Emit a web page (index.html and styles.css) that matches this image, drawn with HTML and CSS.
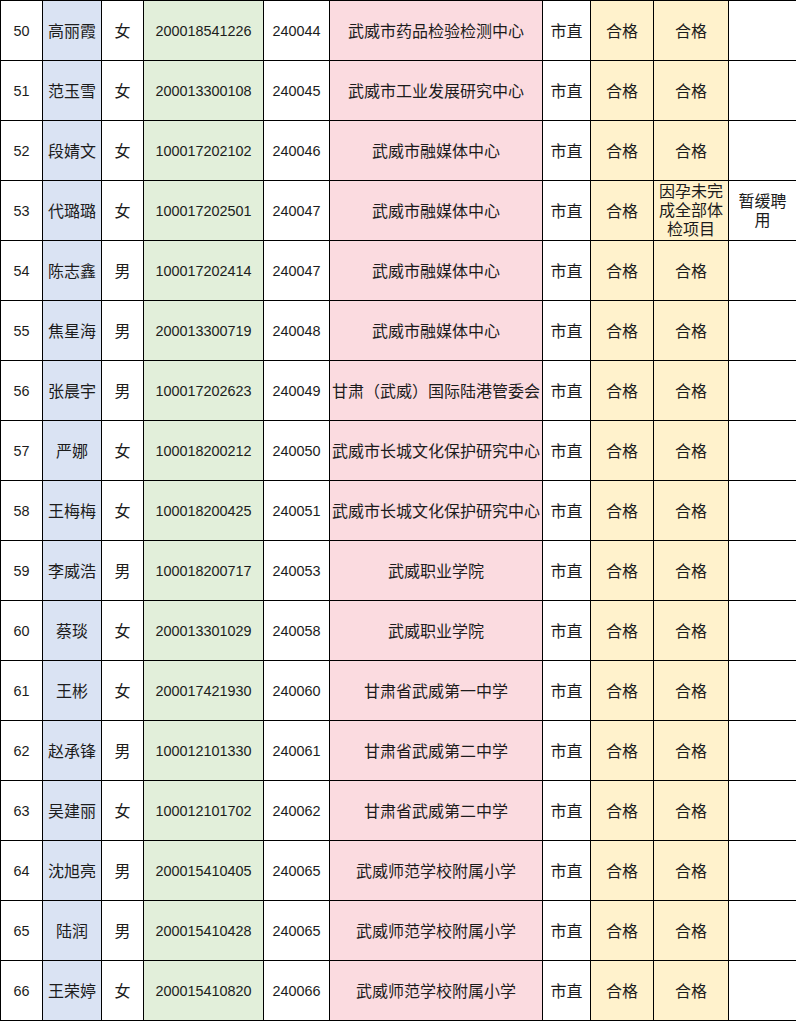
FILE: index.html
```html
<!DOCTYPE html>
<html lang="zh-CN">
<head>
<meta charset="utf-8">
<link rel="stylesheet" href="styles.css">
</head>
<body>
<table class="sheet">
<colgroup>
<col class="c-no"><col class="c-name"><col class="c-sex"><col class="c-id"><col class="c-code"><col class="c-unit"><col class="c-lvl"><col class="c-r1"><col class="c-r2"><col class="c-note">
</colgroup>
<tbody>
<tr><td class="num">50</td><td class="name">高丽霞</td><td>女</td><td class="id num">200018541226</td><td class="num">240044</td><td class="unit">武威市药品检验检测中心</td><td>市直</td><td class="ok">合格</td><td class="ok">合格</td><td></td></tr>
<tr><td class="num">51</td><td class="name">范玉雪</td><td>女</td><td class="id num">200013300108</td><td class="num">240045</td><td class="unit">武威市工业发展研究中心</td><td>市直</td><td class="ok">合格</td><td class="ok">合格</td><td></td></tr>
<tr><td class="num">52</td><td class="name">段婧文</td><td>女</td><td class="id num">100017202102</td><td class="num">240046</td><td class="unit">武威市融媒体中心</td><td>市直</td><td class="ok">合格</td><td class="ok">合格</td><td></td></tr>
<tr><td class="num">53</td><td class="name">代璐璐</td><td>女</td><td class="id num">100017202501</td><td class="num">240047</td><td class="unit">武威市融媒体中心</td><td>市直</td><td class="ok">合格</td><td class="ok wrap">因孕未完成全部体检项目</td><td class="wrap">暂缓聘用</td></tr>
<tr><td class="num">54</td><td class="name">陈志鑫</td><td>男</td><td class="id num">100017202414</td><td class="num">240047</td><td class="unit">武威市融媒体中心</td><td>市直</td><td class="ok">合格</td><td class="ok">合格</td><td></td></tr>
<tr><td class="num">55</td><td class="name">焦星海</td><td>男</td><td class="id num">200013300719</td><td class="num">240048</td><td class="unit">武威市融媒体中心</td><td>市直</td><td class="ok">合格</td><td class="ok">合格</td><td></td></tr>
<tr><td class="num">56</td><td class="name">张晨宇</td><td>男</td><td class="id num">100017202623</td><td class="num">240049</td><td class="unit">甘肃（武威）国际陆港管委会</td><td>市直</td><td class="ok">合格</td><td class="ok">合格</td><td></td></tr>
<tr><td class="num">57</td><td class="name">严娜</td><td>女</td><td class="id num">100018200212</td><td class="num">240050</td><td class="unit">武威市长城文化保护研究中心</td><td>市直</td><td class="ok">合格</td><td class="ok">合格</td><td></td></tr>
<tr><td class="num">58</td><td class="name">王梅梅</td><td>女</td><td class="id num">100018200425</td><td class="num">240051</td><td class="unit">武威市长城文化保护研究中心</td><td>市直</td><td class="ok">合格</td><td class="ok">合格</td><td></td></tr>
<tr><td class="num">59</td><td class="name">李威浩</td><td>男</td><td class="id num">100018200717</td><td class="num">240053</td><td class="unit">武威职业学院</td><td>市直</td><td class="ok">合格</td><td class="ok">合格</td><td></td></tr>
<tr><td class="num">60</td><td class="name">蔡琰</td><td>女</td><td class="id num">200013301029</td><td class="num">240058</td><td class="unit">武威职业学院</td><td>市直</td><td class="ok">合格</td><td class="ok">合格</td><td></td></tr>
<tr><td class="num">61</td><td class="name">王彬</td><td>女</td><td class="id num">200017421930</td><td class="num">240060</td><td class="unit">甘肃省武威第一中学</td><td>市直</td><td class="ok">合格</td><td class="ok">合格</td><td></td></tr>
<tr><td class="num">62</td><td class="name">赵承锋</td><td>男</td><td class="id num">100012101330</td><td class="num">240061</td><td class="unit">甘肃省武威第二中学</td><td>市直</td><td class="ok">合格</td><td class="ok">合格</td><td></td></tr>
<tr><td class="num">63</td><td class="name">吴建丽</td><td>女</td><td class="id num">100012101702</td><td class="num">240062</td><td class="unit">甘肃省武威第二中学</td><td>市直</td><td class="ok">合格</td><td class="ok">合格</td><td></td></tr>
<tr><td class="num">64</td><td class="name">沈旭亮</td><td>男</td><td class="id num">200015410405</td><td class="num">240065</td><td class="unit">武威师范学校附属小学</td><td>市直</td><td class="ok">合格</td><td class="ok">合格</td><td></td></tr>
<tr><td class="num">65</td><td class="name">陆润</td><td>男</td><td class="id num">200015410428</td><td class="num">240065</td><td class="unit">武威师范学校附属小学</td><td>市直</td><td class="ok">合格</td><td class="ok">合格</td><td></td></tr>
<tr><td class="num">66</td><td class="name">王荣婷</td><td>女</td><td class="id num">200015410820</td><td class="num">240066</td><td class="unit">武威师范学校附属小学</td><td>市直</td><td class="ok">合格</td><td class="ok">合格</td><td></td></tr>
</tbody>
</table>
</body>
</html>
```
FILE: styles.css
```css
html, body {
  margin: 0;
  padding: 0;
  background: #ffffff;
}
.sheet {
  border-collapse: collapse;
  table-layout: fixed;
  width: 796px;
  font-family: "Liberation Sans", "Noto Sans CJK SC", sans-serif;
  font-size: 16px;
  color: #1c1c1c;
}
.c-no { width: 42px; }
.c-name { width: 59px; }
.c-sex { width: 42px; }
.c-id { width: 120px; }
.c-code { width: 66px; }
.c-unit { width: 213px; }
.c-lvl { width: 48px; }
.c-r1 { width: 63px; }
.c-r2 { width: 75px; }
.c-note { width: 68px; }
.sheet tr {
  height: 60px;
}
.sheet td {
  border: 1.5px solid #000;
  padding: 2px 1px 0;
  text-align: center;
  vertical-align: middle;
  white-space: nowrap;
  overflow: hidden;
  line-height: 19px;
}
.sheet td.num {
  font-size: 14.4px;
}
.sheet td.name { background: #dae3f3; }
.sheet td.id { background: #e2efda; }
.sheet td.unit { background: #fbdbe0; }
.sheet td.ok { background: #fff2cc; }
.sheet td.wrap {
  white-space: normal;
  padding: 0 5px;
  line-height: 19px;
}
```
